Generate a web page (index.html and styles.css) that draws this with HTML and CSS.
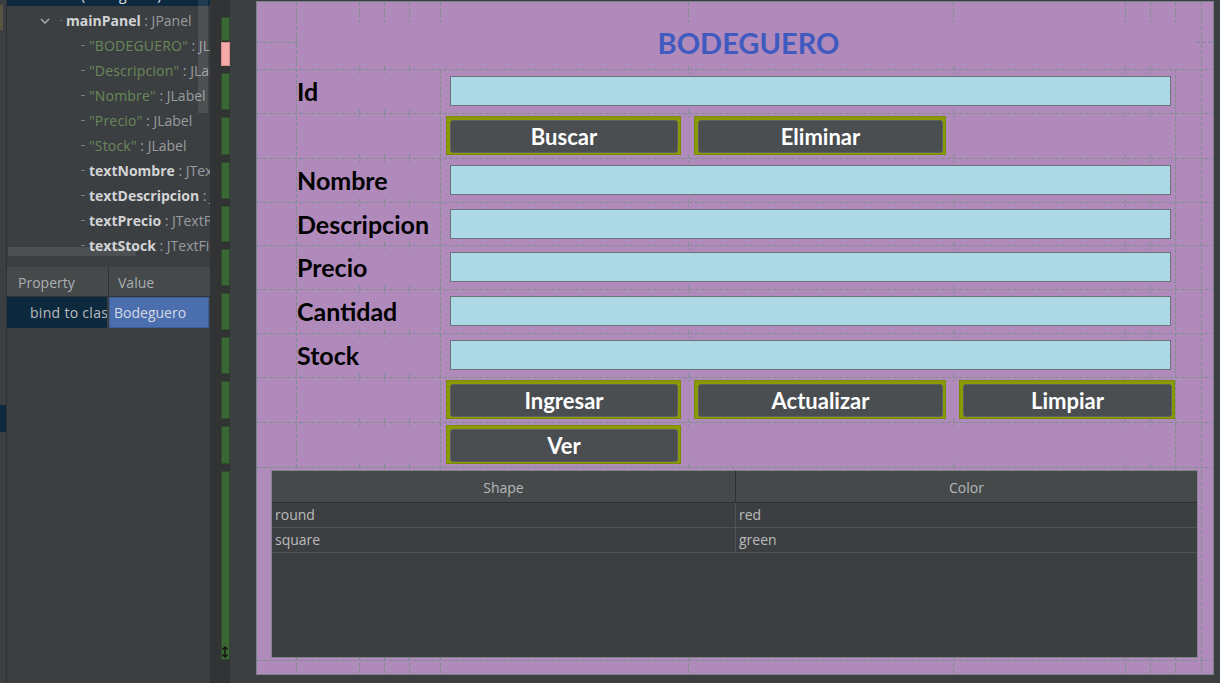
FILE: index.html
```html
<!DOCTYPE html>
<html lang="es">
<head>
    <meta charset="UTF-8">
    <meta name="viewport" content="width=device-width, initial-scale=1.0">
    <title>Bodeguero - Form Designer</title>
    <link rel="stylesheet" href="styles.css">
</head>
<body>
<div class="ide">
    <div class="edge">
        <div class="edge-mark edge-mark-top"></div>
        <div class="edge-mark edge-mark-sel"></div>
    </div>

    <!-- component tree + property sheet -->
    <div class="side">
        <div class="tree">
            <div class="tree-list">
                <div class="tree-row selected"><span class="tree-root">Form (Bodeguero)</span></div>
                <div class="tree-row level1">
                    <svg class="chevron" viewBox="0 0 10 6"><path d="M1 1L5 5L9 1" fill="none" stroke="#aeb1b4" stroke-width="1.4"/></svg>
                    <span class="dot"></span><span class="tree-name">mainPanel</span><span class="tree-type"> : JPanel</span>
                </div>
                <div class="tree-row level2"><span class="branch"></span><span class="tree-str">"BODEGUERO"</span><span class="tree-type"> : JLabel</span></div>
                <div class="tree-row level2"><span class="branch"></span><span class="tree-str">"Descripcion"</span><span class="tree-type"> : JLabel</span></div>
                <div class="tree-row level2"><span class="branch"></span><span class="tree-str">"Nombre"</span><span class="tree-type"> : JLabel</span></div>
                <div class="tree-row level2"><span class="branch"></span><span class="tree-str">"Precio"</span><span class="tree-type"> : JLabel</span></div>
                <div class="tree-row level2"><span class="branch"></span><span class="tree-str">"Stock"</span><span class="tree-type"> : JLabel</span></div>
                <div class="tree-row level2"><span class="branch"></span><span class="tree-name">textNombre</span><span class="tree-type"> : JTextField</span></div>
                <div class="tree-row level2"><span class="branch"></span><span class="tree-name">textDescripcion</span><span class="tree-type"> : JTextField</span></div>
                <div class="tree-row level2"><span class="branch"></span><span class="tree-name">textPrecio</span><span class="tree-type"> : JTextField</span></div>
                <div class="tree-row level2"><span class="branch"></span><span class="tree-name">textStock</span><span class="tree-type"> : JTextField</span></div>
            </div>
            <div class="vscroll"></div>
            <div class="hscroll"></div>
        </div>

        <div class="props">
            <div class="props-head">
                <div>Property</div>
                <div>Value</div>
            </div>
            <div class="props-row">
                <div class="props-key">bind to class</div>
                <div class="props-value">Bodeguero</div>
            </div>
        </div>
    </div>

    <!-- row markers of the form layout -->
    <div class="markers">
        <span class="bar half"></span>
        <span class="bar half pink"></span>
        <span class="bar"></span>
        <span class="bar tall"></span>
        <span class="bar"></span>
        <span class="bar short"></span>
        <span class="bar"></span>
        <span class="bar"></span>
        <span class="bar"></span>
        <span class="bar tall"></span>
        <span class="bar tall"></span>
        <span class="bar grow">
            <svg class="resize" viewBox="0 0 8 12"><path d="M4 1V11M1.5 3.5L4 1L6.5 3.5M1.5 8.5L4 11L6.5 8.5" fill="none" stroke="#111" stroke-width="1.4"/></svg>
        </span>
    </div>

    <div class="spacer"></div>

    <!-- the form being designed -->
    <div class="form">
        <svg class="guides" width="956" height="672" viewBox="0 0 956 672">
            <defs>
                <path id="tick" d="M0 0V20M0 63.5v8M0 107.5v8M0 152.5v8M0 196.5v8M0 239.5v8M0 283.5v8M0 327.5v8M0 371.5v8M0 416.5v8M0 461.5v8M0 655v17"/>
            </defs>
            <g fill="none" stroke="#7f8e8e" stroke-dasharray="4 2">
                <path d="M0 40.5H43M939 40.5H956M0 67.5H956M0 111.5H956M0 156.5H956M0 200.5H956M0 243.5H956M0 287.5H956M0 331.5H956M0 375.5H956M0 420.5H956M0 465.5H956M0 658.5H956"/>
                <path d="M39.5 0V672M944.5 0V672M183.5 67V672M918.5 67V672M183.5 0V20M918.5 0V20"/>
                <use href="#tick" x="102.5"/>
                <use href="#tick" x="127.5"/>
                <use href="#tick" x="152.5"/>
                <use href="#tick" x="431.5"/>
                <use href="#tick" x="696.5"/>
                <use href="#tick" x="868.5"/>
                <use href="#tick" x="893.5"/>
            </g>
        </svg>

        <div class="form-grid">
            <h1 class="form-title">BODEGUERO</h1>

            <label class="label">Id</label>
            <input class="field" type="text">
            <div class="actions">
                <button class="btn"><span class="btn-face">Buscar</span></button>
                <button class="btn btn-wide"><span class="btn-face">Eliminar</span></button>
            </div>

            <label class="label">Nombre</label>
            <input class="field" type="text">
            <label class="label">Descripcion</label>
            <input class="field" type="text">
            <label class="label">Precio</label>
            <input class="field" type="text">
            <label class="label">Cantidad</label>
            <input class="field" type="text">
            <label class="label">Stock</label>
            <input class="field" type="text">

            <div class="actions">
                <button class="btn"><span class="btn-face">Ingresar</span></button>
                <button class="btn btn-wide"><span class="btn-face">Actualizar</span></button>
                <button class="btn btn-narrow"><span class="btn-face">Limpiar</span></button>
            </div>
            <div class="actions">
                <button class="btn"><span class="btn-face">Ver</span></button>
            </div>

            <div class="table">
                <div class="th">Shape</div>
                <div class="th">Color</div>
                <div class="td">round</div>
                <div class="td">red</div>
                <div class="td">square</div>
                <div class="td">green</div>
            </div>
        </div>
    </div>
</div>
</body>
</html>
```

FILE: styles.css
```css
* {
    box-sizing: border-box;
}
body {
    margin: 0;
    background-color: #3c3f41;
    font-family: "Open Sans", sans-serif;
    overflow: hidden;
}
.ide {
    display: flex;
    width: 1220px;
    height: 683px;
}

/* left edge strip */
.edge {
    flex: none;
    width: 7px;
    border-right: 1px solid #2f3133;
    display: flex;
    flex-direction: column;
}
.edge-mark-top {
    margin-top: 5px;
    width: 3px;
    height: 25px;
    background-color: #5b5443;
}
.edge-mark-sel {
    margin-top: 375px;
    width: 6px;
    height: 27px;
    background-color: #0d293e;
}

/* tree */
.side {
    flex: none;
    width: 203px;
    display: flex;
    flex-direction: column;
}
.tree {
    position: relative;
    height: 267px;
    overflow: hidden;
}
.tree-list {
    margin-top: -17px;
}
.tree-row {
    height: 25px;
    display: flex;
    align-items: center;
    white-space: pre;
    font-size: 14px;
    line-height: 25px;
}
.tree-row.selected {
    height: 23px;
    margin-bottom: 2px;
    padding-left: 36px;
    background-color: #0d293e;
}
.tree-root {
    color: #dfe1e5;
}
.level1 {
    padding-left: 33px;
}
.level2 {
    padding-left: 74px;
}
.chevron {
    flex: none;
    width: 10px;
    height: 6px;
    margin-right: 10px;
}
.dot {
    flex: none;
    width: 2px;
    height: 1px;
    margin-right: 4px;
    background-color: #6d7073;
}
.branch {
    flex: none;
    width: 4px;
    height: 1px;
    margin-right: 4px;
    background-color: #77797c;
}
.tree-name {
    font-weight: bold;
    color: #d2d4d6;
}
.tree-str {
    color: #6a8759;
    letter-spacing: 0.2px;
}
.tree-type {
    color: #999c9f;
}
.vscroll {
    position: absolute;
    left: 191px;
    top: 0;
    width: 10px;
    height: 113px;
    background-color: rgba(255, 255, 255, 0.09);
}
.hscroll {
    position: absolute;
    left: 1px;
    top: 247px;
    width: 128px;
    height: 9px;
    background-color: rgba(255, 255, 255, 0.09);
}

/* property sheet */
.props {
    font-size: 14px;
}
.props-head {
    display: grid;
    grid-template-columns: 102px 1fr;
    height: 30px;
    background-color: #45494a;
    border-bottom: 1px solid #313335;
    color: #abafb3;
}
.props-head div {
    line-height: 31px;
    padding-left: 11px;
}
.props-head div:first-child {
    border-right: 1px solid #313335;
}
.props-head div:last-child {
    padding-left: 9px;
}
.props-row {
    display: grid;
    grid-template-columns: 102px 1fr;
    height: 30px;
    line-height: 31px;
    border-bottom: 1px solid #323435;
}
.props-key {
    background-color: #0d293e;
    border-right: 2px solid #3c3f41;
    padding-left: 23px;
    color: #bbbdbf;
    overflow: hidden;
    white-space: nowrap;
    letter-spacing: 0.3px;
}
.props-value {
    margin-right: 1px;
    background-color: #4b6eaf;
    border: 1px solid #3e5e96;
    padding-left: 4px;
    line-height: 29px;
    color: #d5dae3;
}

/* row markers */
.markers {
    flex: none;
    width: 20px;
    display: flex;
    flex-direction: column;
    gap: 7px;
    padding-top: 17px;
    background-color: #313335;
}
.bar {
    position: relative;
    flex: none;
    margin-left: 11px;
    width: 9px;
    height: 37px;
    background-color: #396834;
    border: 1px solid #2f4b2c;
}
.bar.half {
    height: 24px;
}
.bar.pink {
    margin-top: -6px;
    background-color: #f6a9a9;
    border-color: #d98e8e;
}
.bar.tall {
    height: 38px;
}
.bar.short {
    height: 36px;
}
.bar.grow {
    height: 189px;
}
.resize {
    position: absolute;
    left: -1px;
    bottom: 1px;
    width: 8px;
    height: 12px;
}
.spacer {
    flex: none;
    width: 26px;
}

/* designed form */
.form {
    position: relative;
    flex: none;
    width: 958px;
    height: 674px;
    margin-top: 1px;
    border: 1px solid #7b8287;
    background-color: #b08aba;
}
.guides {
    position: absolute;
    left: 0;
    top: 0;
}
.form-grid {
    position: relative;
    display: grid;
    grid-template-columns: 39px 144px 761px 12px;
    grid-template-rows: 67px 44px 45px 44px 43px 44px 44px 44px 45px 45px 193px;
    height: 100%;
}
.form-title {
    grid-column: 2 / 4;
    margin: 0;
    padding-top: 24px;
    text-align: center;
    font: bold 29px/34px Lato, sans-serif;
    color: #405ac0;
}
.label {
    grid-column: 2;
    align-self: center;
    padding-left: 1px;
    font: bold 25px/30px Lato, sans-serif;
    color: #000;
}
.field {
    grid-column: 3;
    align-self: center;
    margin: 0 0 0 10px;
    width: 721px;
    height: 30px;
    padding: 0;
    border: 1px solid #6a7478;
    background-color: #add8e6;
}
.actions {
    grid-column: 3;
    display: flex;
    align-items: flex-start;
    gap: 13px;
    padding: 3px 0 0 6px;
}
.btn {
    width: 235px;
    height: 39px;
    padding: 4px 3px 2px 4px;
    border: 0;
    background-color: #8a9a04;
    box-shadow: inset 0 0 0 1px #7c8b00;
}
.btn-wide {
    width: 252px;
}
.btn-narrow {
    width: 216px;
}
.btn-face {
    display: flex;
    align-items: center;
    justify-content: center;
    height: 100%;
    border-radius: 3px;
    background-color: #4b4e51;
    border: 1px solid #5c6063;
    color: #fff;
    font: bold 22px Lato, sans-serif;
}

/* JTable */
.table {
    grid-column: 1 / -1;
    margin: 3px 15px 2px 14px;
    border: 1px solid #80868b;
    background-color: #3c3f41;
    display: grid;
    grid-template-columns: 464px 1fr;
    grid-auto-rows: max-content;
    align-content: start;
    font-size: 14px;
    color: #bbbbbb;
}
.th {
    height: 32px;
    padding-top: 2px;
    line-height: 29px;
    text-align: center;
    background-color: #45494a;
    border-bottom: 1px solid #2d2f30;
    color: #b5b9bc;
}
.th:first-child {
    border-right: 1px solid #2d2f30;
}
.td {
    height: 25px;
    line-height: 24px;
    padding-left: 3px;
    border-bottom: 1px solid #505457;
}
.td:nth-child(odd) {
    border-right: 1px solid #505457;
}
```
